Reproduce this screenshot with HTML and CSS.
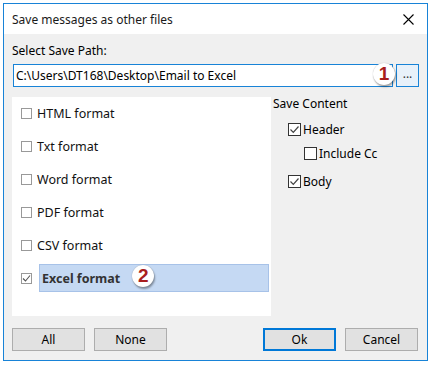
FILE: index.html
```html
<!DOCTYPE html>
<html>
<head>
<meta charset="utf-8">
<link rel="stylesheet" href="styles.css">
</head>
<body>
<div class="window">
  <div class="titlebar">
    <span class="title">Save messages as other files</span>
    <svg class="close" width="11" height="11" viewBox="0 0 11 11"><path d="M0.5 0.5 L10.5 10.5 M10.5 0.5 L0.5 10.5" stroke="#000" stroke-width="1.1" fill="none"/></svg>
  </div>
  <div class="content">
    <div class="label">Select Save Path:</div>
    <div class="pathrow">
      <div class="inputwrap">
        <div class="input">C:\Users\DT168\Desktop\Email to Excel</div>
        <span class="badge badge1">1</span>
      </div>
      <div class="browse">...</div>
    </div>
    <div class="main">
      <div class="formats">
        <div class="item"><span class="cb"></span><span class="txt">HTML format</span></div>
        <div class="item"><span class="cb"></span><span class="txt">Txt format</span></div>
        <div class="item"><span class="cb"></span><span class="txt">Word format</span></div>
        <div class="item"><span class="cb"></span><span class="txt">PDF format</span></div>
        <div class="item"><span class="cb"></span><span class="txt">CSV format</span></div>
        <div class="item selected"><span class="cb"><svg width="11" height="11" viewBox="0 0 11 11"><path d="M2 5.5 L4.5 8 L9 2.5" stroke="#555" stroke-width="1.1" fill="none"/></svg></span><span class="txt sel">Excel format <span class="badge badge2">2</span></span></div>
      </div>
      <div class="savecontent">
        <div class="sc-title">Save Content</div>
        <div class="opt lvl1 first"><span class="cb2"><svg width="13" height="13" viewBox="0 0 13 13"><path d="M2.5 6.5 L5.3 9.3 L10.5 3.5" stroke="#444" stroke-width="1.2" fill="none"/></svg></span>Header</div>
        <div class="opt lvl2"><span class="cb2"></span>Include Cc</div>
        <div class="opt lvl1 last"><span class="cb2"><svg width="13" height="13" viewBox="0 0 13 13"><path d="M2.5 6.5 L5.3 9.3 L10.5 3.5" stroke="#444" stroke-width="1.2" fill="none"/></svg></span>Body</div>
      </div>
    </div>
    <div class="buttons">
      <div class="group">
        <div class="btn">All</div>
        <div class="btn">None</div>
      </div>
      <div class="group">
        <div class="btn default">Ok</div>
        <div class="btn">Cancel</div>
      </div>
    </div>
  </div>
</div>
</body>
</html>
```

FILE: styles.css
```css
html, body {
  margin: 0;
  padding: 0;
  background: #ffffff;
}
body {
  font-family: "Noto Sans", "Open Sans", sans-serif;
  font-size: 12px;
  color: #000;
  padding: 3px;
  width: 433px;
  height: 367px;
  box-sizing: border-box;
}
.window {
  width: 425px;
  height: 358px;
  border: 1px solid #1883d7;
  box-sizing: border-box;
  display: flex;
  flex-direction: column;
  background: #f0f0f0;
}
.titlebar {
  height: 30px;
  background: #fff;
  display: flex;
  align-items: center;
  justify-content: space-between;
  padding: 0 13px 0 8px;
}
.title {
  font-size: 12px;
  color: #1a1a1a;
}
.close {
  display: block;
}
.content {
  flex: 1;
  display: flex;
  flex-direction: column;
  padding: 9px 8px 0 8px;
}
.label {
  line-height: 16px;
  height: 16px;
}
.pathrow {
  display: flex;
  margin-top: 5px;
  gap: 3px;
  padding-left: 1px;
}
.inputwrap {
  position: relative;
  width: 380px;
}
.input {
  height: 23px;
  border: 1px solid #1883d7;
  background: #fff;
  box-sizing: border-box;
  line-height: 21px;
  padding-left: 2px;
  font-size: 12px;
}
.browse {
  width: 23px;
  height: 23px;
  border: 1px solid #1883d7;
  box-sizing: border-box;
  background: #e8f1fa;
  text-align: center;
  line-height: 17px;
  font-size: 12px;
  color: #333;
}
.badge {
  display: inline-block;
  width: 22px;
  height: 22px;
  border-radius: 50%;
  background: #fff;
  box-shadow: 1px 2px 2px rgba(0,0,0,0.35), 0 0 1px rgba(0,0,0,0.3);
  color: #a81e1e;
  font-family: "Liberation Sans", Arial, sans-serif;
  font-size: 19px;
  font-weight: bold;
  text-align: center;
  line-height: 22px;
}
.badge1 {
  position: absolute;
  right: -2px;
  top: -1px;
}
.badge2 {
  margin-left: 12px;
  vertical-align: middle;
  position: relative;
  top: -2px;
}
.main {
  display: flex;
  margin-top: 10px;
  height: 219px;
}
.formats {
  width: 259px;
  background: #fff;
  padding-top: 0px;
  box-sizing: border-box;
}
.item {
  display: flex;
  align-items: center;
  height: 33px;
  padding-left: 9px;
}
.item.selected {
  height: 28px;
  margin-top: 2px;
}
.cb {
  width: 11px;
  height: 11px;
  border: 1px solid #999;
  box-sizing: border-box;
  margin-right: 5px;
  position: relative;
  flex: none;
}
.cb svg {
  position: absolute;
  left: -1px;
  top: -1px;
}
.txt {
  font-size: 12.5px;
  color: #111;
}
.txt.sel {
  font-weight: bold;
  color: #333;
  background: #c5d9f3;
  border: 1px solid #a7c2e8;
  box-sizing: border-box;
  width: 230px;
  height: 28px;
  display: flex;
  align-items: center;
  padding-left: 2px;
  margin-left: 2px;
}
.savecontent {
  padding-left: 2px;
}
.sc-title {
  line-height: 16px;
  height: 16px;
  margin-top: -1px;
}
.opt {
  display: flex;
  align-items: center;
  height: 24px;
}
.opt.first {
  margin-top: 5px;
}
.opt.last {
  margin-top: 4px;
}
.opt.lvl1 {
  padding-left: 15px;
}
.opt.lvl2 {
  padding-left: 31px;
}
.cb2 {
  width: 13px;
  height: 13px;
  border: 1px solid #333;
  box-sizing: border-box;
  margin-right: 2px;
  position: relative;
  background: #fff;
  flex: none;
}
.cb2 svg {
  position: absolute;
  left: -1px;
  top: -1px;
}
.buttons {
  display: flex;
  justify-content: space-between;
  margin-top: 12px;
  padding-right: 1px;
}
.group {
  display: flex;
  gap: 9px;
}
.btn {
  width: 73px;
  height: 23px;
  border: 1px solid #adadad;
  background: #e1e1e1;
  box-sizing: border-box;
  text-align: center;
  line-height: 21px;
  font-size: 12px;
}
.btn.default {
  border: 2px solid #0078d7;
  line-height: 19px;
}
```
